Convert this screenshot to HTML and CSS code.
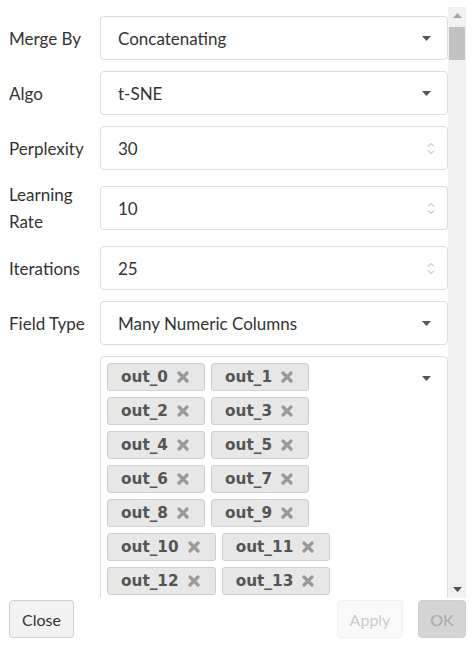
FILE: index.html
```html
<!DOCTYPE html>
<html>
<head>
<meta charset="utf-8">
<link rel="stylesheet" href="styles.css">
</head>
<body>
<div class="dialog">
  <div class="scroll-area">
    <div class="form">
      <div class="row">
        <div class="label">Merge By</div>
        <div class="control select"><span class="value">Concatenating</span><svg class="caret" width="9" height="5" viewBox="0 0 9 5"><path d="M0 0H9L4.5 5Z" fill="#555"/></svg></div>
      </div>
      <div class="row">
        <div class="label">Algo</div>
        <div class="control select"><span class="value">t-SNE</span><svg class="caret" width="9" height="5" viewBox="0 0 9 5"><path d="M0 0H9L4.5 5Z" fill="#555"/></svg></div>
      </div>
      <div class="row">
        <div class="label">Perplexity</div>
        <div class="control number"><span class="value">30</span><svg class="spin" width="8" height="13" viewBox="0 0 8 13"><path d="M1 4.5L4 1.5L7 4.5M1 8.5L4 11.5L7 8.5" fill="none" stroke="#aaa" stroke-width="1"/></svg></div>
      </div>
      <div class="row">
        <div class="label">Learning Rate</div>
        <div class="control number"><span class="value">10</span><svg class="spin" width="8" height="13" viewBox="0 0 8 13"><path d="M1 4.5L4 1.5L7 4.5M1 8.5L4 11.5L7 8.5" fill="none" stroke="#aaa" stroke-width="1"/></svg></div>
      </div>
      <div class="row">
        <div class="label">Iterations</div>
        <div class="control number"><span class="value">25</span><svg class="spin" width="8" height="13" viewBox="0 0 8 13"><path d="M1 4.5L4 1.5L7 4.5M1 8.5L4 11.5L7 8.5" fill="none" stroke="#aaa" stroke-width="1"/></svg></div>
      </div>
      <div class="row">
        <div class="label">Field Type</div>
        <div class="control select"><span class="value">Many Numeric Columns</span><svg class="caret" width="9" height="5" viewBox="0 0 9 5"><path d="M0 0H9L4.5 5Z" fill="#555"/></svg></div>
      </div>
      <div class="row top">
        <div class="label"></div>
        <div class="control multi">
          <div class="tags">
            <span class="tag">out_0<svg class="x" width="12" height="12" viewBox="0 0 12 12"><path d="M2 2L10 10M10 2L2 10" stroke="#9a9a9a" stroke-width="3.2" stroke-linecap="round"/></svg></span>
            <span class="tag">out_1<svg class="x" width="12" height="12" viewBox="0 0 12 12"><path d="M2 2L10 10M10 2L2 10" stroke="#9a9a9a" stroke-width="3.2" stroke-linecap="round"/></svg></span>
            <span class="tag">out_2<svg class="x" width="12" height="12" viewBox="0 0 12 12"><path d="M2 2L10 10M10 2L2 10" stroke="#9a9a9a" stroke-width="3.2" stroke-linecap="round"/></svg></span>
            <span class="tag">out_3<svg class="x" width="12" height="12" viewBox="0 0 12 12"><path d="M2 2L10 10M10 2L2 10" stroke="#9a9a9a" stroke-width="3.2" stroke-linecap="round"/></svg></span>
            <span class="tag">out_4<svg class="x" width="12" height="12" viewBox="0 0 12 12"><path d="M2 2L10 10M10 2L2 10" stroke="#9a9a9a" stroke-width="3.2" stroke-linecap="round"/></svg></span>
            <span class="tag">out_5<svg class="x" width="12" height="12" viewBox="0 0 12 12"><path d="M2 2L10 10M10 2L2 10" stroke="#9a9a9a" stroke-width="3.2" stroke-linecap="round"/></svg></span>
            <span class="tag">out_6<svg class="x" width="12" height="12" viewBox="0 0 12 12"><path d="M2 2L10 10M10 2L2 10" stroke="#9a9a9a" stroke-width="3.2" stroke-linecap="round"/></svg></span>
            <span class="tag">out_7<svg class="x" width="12" height="12" viewBox="0 0 12 12"><path d="M2 2L10 10M10 2L2 10" stroke="#9a9a9a" stroke-width="3.2" stroke-linecap="round"/></svg></span>
            <span class="tag">out_8<svg class="x" width="12" height="12" viewBox="0 0 12 12"><path d="M2 2L10 10M10 2L2 10" stroke="#9a9a9a" stroke-width="3.2" stroke-linecap="round"/></svg></span>
            <span class="tag">out_9<svg class="x" width="12" height="12" viewBox="0 0 12 12"><path d="M2 2L10 10M10 2L2 10" stroke="#9a9a9a" stroke-width="3.2" stroke-linecap="round"/></svg></span>
            <span class="tag">out_10<svg class="x" width="12" height="12" viewBox="0 0 12 12"><path d="M2 2L10 10M10 2L2 10" stroke="#9a9a9a" stroke-width="3.2" stroke-linecap="round"/></svg></span>
            <span class="tag">out_11<svg class="x" width="12" height="12" viewBox="0 0 12 12"><path d="M2 2L10 10M10 2L2 10" stroke="#9a9a9a" stroke-width="3.2" stroke-linecap="round"/></svg></span>
            <span class="tag">out_12<svg class="x" width="12" height="12" viewBox="0 0 12 12"><path d="M2 2L10 10M10 2L2 10" stroke="#9a9a9a" stroke-width="3.2" stroke-linecap="round"/></svg></span>
            <span class="tag">out_13<svg class="x" width="12" height="12" viewBox="0 0 12 12"><path d="M2 2L10 10M10 2L2 10" stroke="#9a9a9a" stroke-width="3.2" stroke-linecap="round"/></svg></span>
          </div>
          <svg class="caret multi-caret" width="9" height="5" viewBox="0 0 9 5"><path d="M0 0H9L4.5 5Z" fill="#555"/></svg>
        </div>
      </div>
    </div>
    <div class="scrollbar">
      <div class="sb-btn"><svg width="9" height="5" viewBox="0 0 9 5"><path d="M0 5H9L4.5 0Z" fill="#a3a3a3"/></svg></div>
      <div class="sb-track"><div class="sb-thumb"></div></div>
      <div class="sb-btn"><svg width="9" height="5" viewBox="0 0 9 5"><path d="M0 0H9L4.5 5Z" fill="#505050"/></svg></div>
    </div>
  </div>
  <div class="footer">
    <button class="btn close">Close</button>
    <div class="spacer"></div>
    <button class="btn apply">Apply</button>
    <button class="btn ok">OK</button>
  </div>
</div>
</body>
</html>
```

FILE: styles.css
```css
html, body {
  margin: 0;
  padding: 0;
  background: #fff;
}
body {
  font-family: Lato, "Liberation Sans", sans-serif;
  color: #333;
  width: 474px;
  height: 648px;
  overflow: hidden;
}
.dialog {
  padding: 7px 8px 0 9px;
}
.scroll-area {
  display: flex;
  height: 591px;
  overflow: hidden;
}
.form {
  flex: 1;
  padding-top: 9px;
  min-width: 0;
}
.row {
  display: flex;
  align-items: center;
  margin-bottom: 11px;
}
.row.top {
  align-items: flex-start;
}
.label {
  width: 91px;
  flex: none;
  font-size: 17px;
  line-height: 27px;
  color: #333;
  padding-right: 4px;
  box-sizing: border-box;
}
.control {
  flex: 1;
  height: 44px;
  box-sizing: border-box;
  border: 1px solid #dcdcdc;
  border-radius: 4px;
  background: #fff;
  display: flex;
  align-items: center;
  padding: 0 14px 0 17px;
  font-size: 17px;
}
.control .value {
  flex: 1;
}
.caret {
  display: block;
  margin-right: 2px;
}
.spin {
  display: block;
  margin-right: -2px;
}
.control.multi {
  height: auto;
  align-items: flex-start;
  padding: 6px 14px 6px 6px;
}
.tags {
  flex: 1;
  display: flex;
  flex-wrap: wrap;
  gap: 6px;
  max-width: 240px;
  margin-right: auto;
}
.multi-caret {
  margin-top: 13px;
}
.tag {
  display: inline-flex;
  align-items: center;
  height: 28px;
  box-sizing: border-box;
  padding: 0 15px 0 13px;
  border: 1px solid #cfcfcf;
  border-radius: 3px;
  background: #e7e7e7;
  font-family: "DejaVu Sans", sans-serif;
  font-weight: bold;
  font-size: 15.3px;
  color: #555;
}
.tag .x {
  display: block;
  margin-left: 9px;
  flex: none;
}
.scrollbar {
  width: 18px;
  flex: none;
  background: #f1f1f1;
  display: flex;
  flex-direction: column;
}
.sb-btn {
  height: 17px;
  display: flex;
  align-items: center;
  justify-content: center;
}
.sb-track {
  flex: 1;
  padding-top: 3px;
}
.sb-thumb {
  height: 33px;
  margin: 0 1px;
  background: #c1c1c1;
}
.footer {
  display: flex;
  margin-top: 2px;
  gap: 15px;
}
.spacer {
  flex: 1;
}
.btn {
  height: 38px;
  font-family: Lato, "Liberation Sans", sans-serif;
  font-size: 16px;
  border-radius: 4px;
  padding: 0;
  box-sizing: border-box;
}
.btn.close {
  width: 65px;
  background: #f2f2f2;
  border: 1px solid #cfcfcf;
  color: #333;
}
.btn.apply {
  width: 66px;
  background: #f9f9f9;
  border: 1px solid #f1f1f1;
  color: #cccccc;
}
.btn.ok {
  width: 48px;
  background: #d4d4d4;
  border: 1px solid #cdcdcd;
  color: #a9a9a9;
}
```
